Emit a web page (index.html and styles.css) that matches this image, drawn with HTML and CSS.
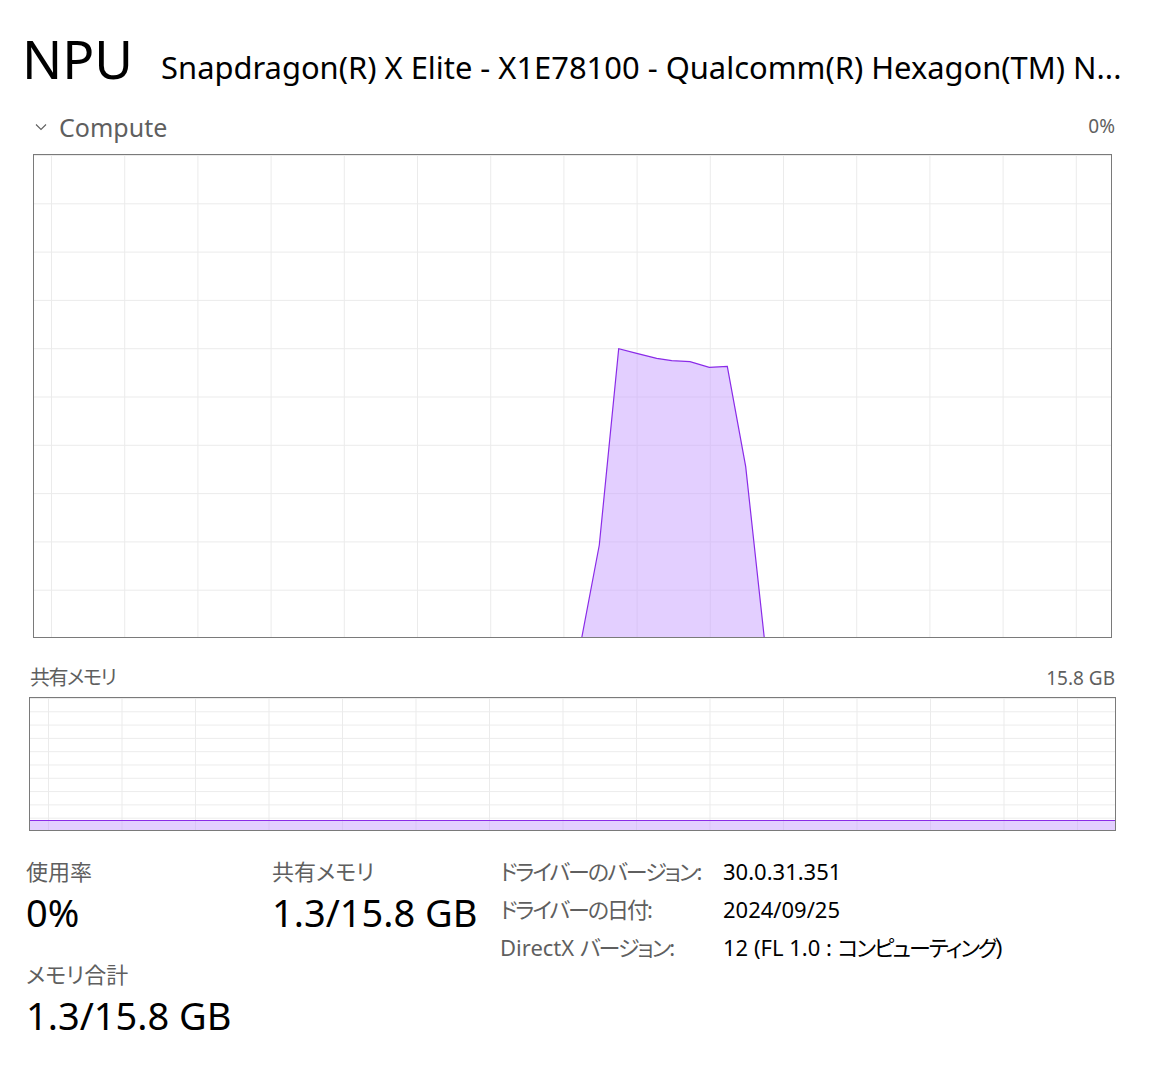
FILE: index.html
```html
<!DOCTYPE html>
<html lang="ja">
<head>
    <meta charset="UTF-8">
    <title>NPU</title>
    <link rel="stylesheet" href="styles.css">
</head>
<body>

<div class="page">
    <div class="header">
        <div class="title">NPU</div>
        <div class="device">Snapdragon(R) X Elite - X1E78100 - Qualcomm(R) Hexagon(TM) N...</div>
    </div>

    <div class="graph-head compute-head">
        <div class="graph-name">
            <svg class="chevron" width="12" height="8" viewBox="0 0 12 8">
                <path d="M1 1.5 L6 6.5 L11 1.5" fill="none" stroke="#5f5f5f" stroke-width="1.1"/>
            </svg>
            Compute
        </div>
        <div class="graph-max">0%</div>
    </div>
    <div class="graph compute-graph">
        <svg width="1077" height="482" viewBox="0 0 1077 482" shape-rendering="crispEdges">
            <defs>
                <pattern id="gridA" patternUnits="userSpaceOnUse" x="17" y="0" width="73.2" height="48.3">
                    <line x1="0.5" y1="0" x2="0.5" y2="48.3" stroke="#ebebeb"/>
                    <line x1="0" y1="0.5" x2="73.2" y2="0.5" stroke="#ebebeb"/>
                </pattern>
            </defs>
            <rect x="0" y="0" width="1077" height="482" fill="url(#gridA)"/>
            <polygon shape-rendering="auto" fill="rgba(200, 160, 255, 0.5)" stroke="#8a2be8" stroke-width="1.2"
                     points="547.7,483 565.3,390 584.7,193.7 602.7,198.3 622.7,203.3 637.7,205.7 656,206.7 675.3,212.3 693.3,211.3 711.7,311.7 730.3,483"/>
        </svg>
    </div>

    <div class="graph-head memory-head">
        <div class="graph-name">共有メモリ</div>
        <div class="graph-max">15.8 GB</div>
    </div>
    <div class="graph memory-graph">
        <svg width="1085" height="132" viewBox="0 0 1085 132" shape-rendering="crispEdges">
            <defs>
                <pattern id="gridB" patternUnits="userSpaceOnUse" x="18" y="0" width="73.5" height="13.3">
                    <line x1="0.5" y1="0" x2="0.5" y2="13.3" stroke="#ebebeb"/>
                    <line x1="0" y1="0.5" x2="73.5" y2="0.5" stroke="#ebebeb"/>
                </pattern>
            </defs>
            <rect x="0" y="0" width="1085" height="132" fill="url(#gridB)"/>
            <rect x="0" y="122" width="1085" height="10" fill="rgba(200, 160, 255, 0.5)"/>
            <line x1="0" y1="122.5" x2="1085" y2="122.5" stroke="#8a2be8" stroke-width="1.2"/>
        </svg>
    </div>

    <div class="stats">
        <div class="stat-col">
            <div class="stat">
                <div class="stat-label">使用率</div>
                <div class="stat-value">0%</div>
            </div>
            <div class="stat">
                <div class="stat-label">メモリ合計</div>
                <div class="stat-value">1.3/15.8 GB</div>
            </div>
        </div>
        <div class="stat-col">
            <div class="stat">
                <div class="stat-label">共有メモリ</div>
                <div class="stat-value">1.3/15.8 GB</div>
            </div>
        </div>
        <div class="info">
            <div class="info-label"><span class="kana">ドライバーのバージョン</span>:</div>
            <div class="info-value">30.0.31.351</div>
            <div class="info-label"><span class="kana">ドライバーの日付</span>:</div>
            <div class="info-value">2024/09/25</div>
            <div class="info-label">DirectX <span class="kana">バージョン</span>:</div>
            <div class="info-value">12 (FL 1.0 : <span class="kana">コンピューティング</span>)</div>
        </div>
    </div>
</div>

</body>
</html>
```

FILE: styles.css
```css
body {
    margin: 0;
    background-color: #fff;
    color: #000;
    font-family: "Noto Sans", "Noto Sans CJK JP", sans-serif;
    font-feature-settings: "palt";
}
.page {
    padding: 28px 50px 0 22px;
}
.header {
    display: flex;
    align-items: baseline;
    gap: 28px;
    height: 61px;
}
.header .title {
    font-size: 53px;
    line-height: 61px;
    flex-shrink: 0;
}
.header .device {
    font-size: 30.9px;
    white-space: nowrap;
}
.graph-head {
    display: flex;
    justify-content: space-between;
    align-items: flex-start;
    color: #5f5f5f;
}
.graph-head .graph-max {
    font-size: 19px;
    margin-right: 1px;
}
.compute-head {
    margin-top: 15px;
    padding-left: 13px;
    height: 50px;
}
.compute-head .graph-name {
    font-size: 25px;
    line-height: 40px;
    padding-top: 3px;
    display: flex;
    align-items: center;
    gap: 12px;
}
.compute-head .graph-max {
    line-height: 45px;
}
.memory-head {
    margin-top: 24px;
    padding-left: 8px;
    height: 35px;
    line-height: 32px;
}
.memory-head .graph-name {
    font-size: 20px;
    letter-spacing: -1.5px;
}
.graph {
    border: 1px solid #7a7a7a;
    line-height: 0;
}
.graph svg {
    display: block;
}
.compute-graph {
    margin: 0 4px 0 11px;
}
.memory-graph {
    margin: 0 0 0 7px;
}
.stats {
    display: flex;
    align-items: flex-start;
    margin-top: 24px;
    padding-left: 4px;
}
.stat-col {
    display: flex;
    flex-direction: column;
    gap: 21px;
}
.stat-col:nth-child(1) {
    width: 246px;
}
.stat-col:nth-child(2) {
    width: 228px;
}
.stat-label {
    font-size: 22px;
    color: #5f5f5f;
    line-height: 32px;
}
.stat-value {
    font-size: 38px;
    line-height: 50px;
}
.info {
    display: grid;
    grid-template-columns: 223px auto;
    row-gap: 6px;
    font-size: 22px;
    line-height: 32px;
    white-space: nowrap;
}
.info-label {
    color: #5f5f5f;
}
.info .kana {
    letter-spacing: -2px;
}
```
